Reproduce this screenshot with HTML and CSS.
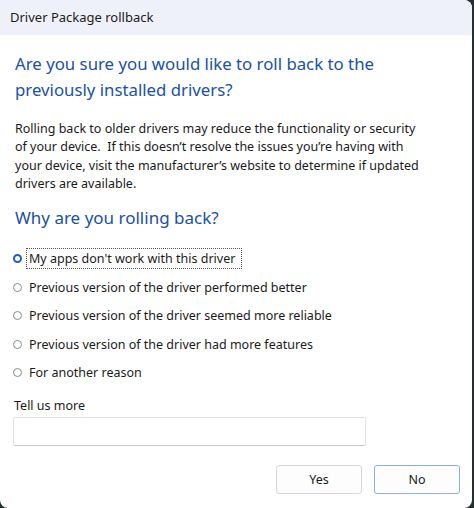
FILE: index.html
```html
<!DOCTYPE html>
<html>
<head>
<meta charset="utf-8">
<title>Driver Package rollback</title>
<link rel="stylesheet" href="styles.css">
</head>
<body>
<div class="dialog">
<header class="titlebar">Driver Package rollback</header>
<div class="content">
<h1>Are you sure you would like to roll back to the<br>previously installed drivers?</h1>
<p class="intro">Rolling back to older drivers may reduce the functionality or security<br>of your device.&nbsp; If this doesn’t resolve the issues you’re having with<br>your device, visit the manufacturer’s website to determine if updated<br>drivers are available.</p>
<h2>Why are you rolling back?</h2>
<ul class="reasons">
<li><span class="radio checked"></span><span class="label focus">My apps don't work with this driver</span></li>
<li><span class="radio"></span><span class="label">Previous version of the driver performed better</span></li>
<li><span class="radio"></span><span class="label">Previous version of the driver seemed more reliable</span></li>
<li><span class="radio"></span><span class="label">Previous version of the driver had more features</span></li>
<li><span class="radio"></span><span class="label">For another reason</span></li>
</ul>
<div class="more">Tell us more</div>
<div class="textbox"></div>
<div class="buttons">
<button class="btn">Yes</button>
<button class="btn default">No</button>
</div>
</div>
</div>
</body>
</html>
```
FILE: styles.css
```css
html,body{margin:0;padding:0;}
body{background-color:#22302f;font-family:"Noto Sans","Open Sans",sans-serif;color:#1a1a1a;width:474px;height:508px;overflow:hidden;}
.dialog{width:472px;height:508px;background-color:#fff;border-radius:0 8px 8px 8px;overflow:hidden;}
.titlebar{height:35px;line-height:35px;background-color:#eef1f9;padding-left:10px;font-size:13px;color:#1b1b1b;}
.content{padding:0 0 0 15px;}
h1{font-weight:normal;font-size:16.8px;line-height:26px;color:#2150a2;margin:16px 0 0;}
.intro{font-size:12.5px;line-height:18.4px;margin:17px 0 0;white-space:nowrap;}
h2{font-weight:normal;font-size:17px;line-height:26px;color:#2150a2;margin:11px 0 0;}
.reasons{margin:14px 0 0;padding:0;}
.reasons li{list-style:none;display:flex;align-items:center;height:28.5px;font-size:12.5px;}
.radio{width:7px;height:7px;border:1px solid #8a8a8a;border-radius:50%;margin:0 4px 0 -2px;flex:none;}
.radio.checked{width:5px;height:5px;border:2px solid #1f5fc4;}
.label{padding:1px 2px;border:1px solid transparent;}
.label.focus{border:1px dotted #555;padding-right:6px;}
.more{font-size:12.5px;line-height:18px;margin:10px 0 0 -1px;}
.textbox{width:351px;height:27px;margin:2px 0 0 -2px;border:1px solid #e2e2e2;border-bottom-color:#c8c8c8;border-radius:2px;}
.buttons{display:flex;justify-content:flex-end;gap:12px;margin:19px 12px 0 0;}
.btn{width:86px;height:29px;font-family:inherit;font-size:12.5px;color:#1a1a1a;background-color:#fdfdfd;border:1px solid #d6d6d6;border-radius:3px;padding:0;}
.btn.default{border-color:#8fb0d6;}
```
